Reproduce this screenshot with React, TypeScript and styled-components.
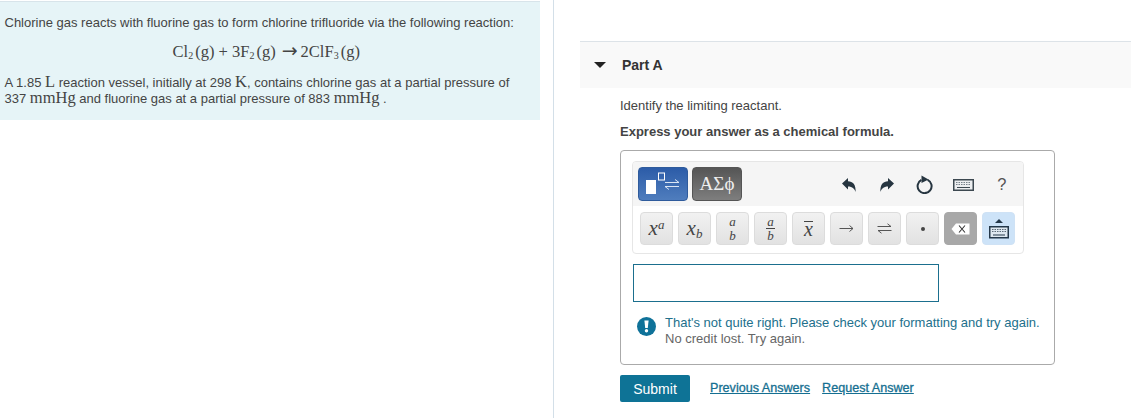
import React from "react";
import styled, { createGlobalStyle } from "styled-components";

const Global = createGlobalStyle`
  html, body { margin: 0; padding: 0; background: #fff; }
  body { font-family: "Liberation Sans", Arial, sans-serif; color: #444; }
`;

const Page = styled.div`
  display: flex;
  width: 1131px;
  height: 418px;
  overflow: hidden;
`;
const LeftColumn = styled.div`
  width: 553px;
  flex: none;
  border-right: 1px solid #d3dfe8;
  padding-top: 1px;
  box-sizing: content-box;
`;
const Intro = styled.div`
  width: 540px;
  height: 119px;
  box-sizing: border-box;
  background: #e6f4f7;
  border-top: 1px solid #d8e4ea;
  padding: 13px 0 0 4.5px;
  font-size: 13px;
  line-height: 16px;
  color: #444;
`;
const Equation = styled.div`
  font-family: "Liberation Serif", serif;
  font-size: 16.5px;
  line-height: 20px;
  text-align: center;
  margin: 11px 0 13px;
  padding-right: 12px;
  color: #444;
  sub { font-size: 10px; line-height: 0; vertical-align: -2px; }
`;
const Paren = styled.span`
  margin-left: 2px;
`;
const ReactionArrow = styled.span`
  font-family: "DejaVu Sans", sans-serif;
  font-size: 19px;
  line-height: 0;
  margin: 0 3px 0 6px;
`;
const Mathy = styled.span`
  font-family: "Liberation Serif", serif;
  font-size: 16.5px;
  line-height: 14px;
  display: inline-block;
`;
const RightColumn = styled.div`
  flex: 1;
  padding: 41px 0 0 26px;
  min-width: 0;
`;
const PartHeader = styled.div`
  display: flex;
  align-items: center;
  height: 47px;
  box-sizing: border-box;
  background: #f9f9f9;
  border-top: 1px solid #dde3e8;
  padding: 0 0 0 14px;
`;
const Caret = styled.span`
  width: 0;
  height: 0;
  border-left: 6px solid transparent;
  border-right: 6px solid transparent;
  border-top: 6px solid #222;
  margin-right: 16px;
`;
const PartTitle = styled.span`
  font-size: 14px;
  font-weight: 700;
  color: #333;
`;
const Body = styled.div`
  padding: 10px 0 0 40px;
`;
const Prompt = styled.div`
  font-size: 13px;
  line-height: 16px;
  color: #444;
`;
const Instruction = styled(Prompt)`
  font-weight: 700;
  margin-top: 10px;
`;
const Editor = styled.div`
  width: 435px;
  height: 215px;
  box-sizing: border-box;
  margin-top: 10px;
  border: 1px solid #aaa;
  border-radius: 4px;
  padding: 10px 0 0 11px;
`;
const Palette = styled.div`
  width: 392px;
  height: 93px;
  box-sizing: border-box;
  border: 1px solid #e6e6e6;
  border-radius: 4px;
  overflow: hidden;
`;
const TopBar = styled.div`
  display: flex;
  align-items: center;
  height: 44px;
  box-sizing: border-box;
  background: #f5f5f5;
  padding: 0 2px 0 5px;
  gap: 4px;
`;
const ModeButton = styled.div<{ $blue?: boolean }>`
  width: 50px;
  height: 34px;
  box-sizing: border-box;
  border-radius: 4px;
  border: 1px solid ${(p) => (p.$blue ? "#2f5b9c" : "#555")};
  background: ${(p) =>
    p.$blue
      ? "linear-gradient(#2c5ca8, #4f7dbd)"
      : "linear-gradient(#555, #7e7e7e)"};
  display: flex;
  align-items: center;
  justify-content: center;
  color: #eee;
  font-family: "Liberation Serif", serif;
  font-size: 19px;
`;
const ToolGroup = styled.div`
  margin-left: auto;
  display: flex;
  align-items: center;
  color: #333;
  padding-top: 1px;
`;
const Tool = styled.div`
  width: 38.25px;
  height: 34px;
  display: flex;
  align-items: center;
  justify-content: center;
`;
const Help = styled(Tool)`
  font-size: 16.5px;
  color: #555;
`;
const SymbolRow = styled.div`
  display: flex;
  gap: 5px;
  padding: 6px 0 0 7px;
`;
const SymbolButton = styled.div<{ $tone?: "dark" | "blue" }>`
  width: 33px;
  height: 33px;
  box-sizing: border-box;
  border-radius: 4px;
  border: 1px solid
    ${(p) => (p.$tone === "dark" ? "#a8a8a8" : p.$tone === "blue" ? "#cfe2f5" : "#dcdcdc")};
  background: ${(p) =>
    p.$tone === "dark"
      ? "#a8a8a8"
      : p.$tone === "blue"
      ? "#cde3f8"
      : "linear-gradient(#f1f1f1, #e2e2e2)"};
  display: flex;
  align-items: center;
  justify-content: center;
  font-family: "Liberation Serif", serif;
  font-style: italic;
  font-size: 21px;
  color: #444;
`;
const Script = styled.span`
  white-space: nowrap;
  sup { font-size: 13px; line-height: 0; vertical-align: 6px; }
  sub { font-size: 13px; line-height: 0; vertical-align: -3px; }
`;
const Dot = styled.span`
  width: 4px;
  height: 4px;
  border-radius: 50%;
  background: #444;
`;
const Stack = styled.div<{ $rule?: boolean }>`
  display: flex;
  flex-direction: column;
  align-items: center;
  font-size: 13px;
  line-height: 13px;
  span + span { border-top: 1px solid ${(p) => (p.$rule ? "#444" : "transparent")}; padding: 0 1px; }
`;
const Overbar = styled.span`
  border-top: 1px solid #444;
  line-height: 14px;
  font-size: 20px;
`;
const Answer = styled.div`
  width: 306px;
  height: 38px;
  box-sizing: border-box;
  margin: 10px 0 0 1px;
  border: 1px solid #1b6f8e;
`;
const Feedback = styled.div`
  display: flex;
  margin: 13px 0 0 5px;
  gap: 9px;
`;
const Alert = styled.div`
  width: 19px;
  height: 19px;
  margin-top: 2px;
  border-radius: 50%;
  background: #0f7299;
  color: #fff;
  flex: none;
  display: flex;
  align-items: center;
  justify-content: center;
`;
const FeedbackText = styled.div`
  font-size: 13px;
  line-height: 16px;
`;
const FeedbackLead = styled.div`
  color: #22708c;
`;
const FeedbackNote = styled.div`
  color: #666;
`;
const Actions = styled.div`
  display: flex;
  align-items: center;
  margin-top: 10px;
`;
const Submit = styled.div`
  width: 70px;
  height: 27px;
  background: #0e7396;
  color: #fff;
  border-radius: 2px;
  font-size: 14px;
  display: flex;
  align-items: center;
  justify-content: center;
  margin-right: 20px;
`;
const ActionLink = styled.a`
  color: #156f91;
  font-size: 12.6px;
  -webkit-text-stroke: 0.3px #156f91;
  text-decoration: underline;
  margin: 0 12px 1px 0;
`;

const ModeIcon = () => (
  <svg width="36" height="26" viewBox="0 0 36 26">
    <rect x="1" y="9" width="10" height="14" fill="#fff" />
    <rect x="13.5" y="2" width="6" height="7" fill="none" stroke="#fff" />
    <path d="M20 11.5h14M30 8.5l4 3M34 15.5H20M24 18.5l-4-3" fill="none" stroke="#dbe6f4" strokeWidth="1" />
  </svg>
);
const Undo = ({ flip }: { flip?: boolean }) => (
  <svg width="14" height="14" viewBox="0 0 14 14" style={flip ? { transform: "scaleX(-1)" } : undefined}>
    <path d="M0 5.5L6 0V3.2C10.8 3.2 14 6.5 13.6 14C12.8 11 10.5 8.5 6 8.5V11.5Z" fill="#263540" />
  </svg>
);
const Redo = () => (
  <svg width="18" height="19" viewBox="0 0 18 19">
    <path d="M11.6 4.8A7 7 0 1 1 5.4 4.9" fill="none" stroke="#263540" strokeWidth="2" />
    <path d="M5.5 0.5L12.5 4.6L5.5 8Z" fill="#263540" />
  </svg>
);
const Keyboard = () => (
  <svg width="21" height="12" viewBox="0 0 21 12">
    <rect x="0.75" y="0.75" width="19.5" height="10.5" fill="#eceef0" stroke="#3c4850" strokeWidth="1.5" />
    <path d="M3 3.5h15M3 5.5h15" stroke="#77828a" strokeDasharray="1.5 1" />
    <path d="M4 8.5h13" stroke="#3c4850" />
  </svg>
);
const Arrow = () => (
  <svg width="15" height="9" viewBox="0 0 15 9">
    <path d="M0.5 4.5H14M10.5 1.5L14 4.5L10.5 7.5" fill="none" stroke="#555" />
  </svg>
);
const Equilibrium = () => (
  <svg width="15" height="11" viewBox="0 0 15 11">
    <path d="M0.5 3.5H14M10.5 0.8L14 3.5M14.5 7.5H1M4.5 10.2L1 7.5" fill="none" stroke="#555" />
  </svg>
);
const Backspace = () => (
  <svg width="19" height="12" viewBox="0 0 19 12">
    <path d="M5 0.5H18.5V11.5H5L0.5 6Z" fill="#fff" />
    <path d="M8 2.5l6 7M14 2.5l-6 7" stroke="#333" strokeWidth="1.1" />
  </svg>
);
const KeyboardToggle = () => (
  <svg width="20" height="21" viewBox="0 0 20 21">
    <path d="M10 1l4 4H6z" fill="#24384a" />
    <g transform="translate(0 8)">
      <rect x="0.75" y="0.75" width="18.5" height="11" fill="#dfe8f0" stroke="#24384a" strokeWidth="1.5" />
      <path d="M3 3.5h14M3 5.5h14" stroke="#5c6b78" strokeDasharray="1.5 1" />
      <path d="M4 9h12" stroke="#24384a" />
    </g>
  </svg>
);
const Bang = () => (
  <svg width="5" height="13" viewBox="0 0 5 13">
    <path d="M0.4 0.5H4.6L3.8 8H1.2Z" fill="#fff" />
    <circle cx="2.5" cy="10.8" r="1.7" fill="#fff" />
  </svg>
);

export default function App() {
  return (
    <>
      <Global />
      <Page>
        <LeftColumn>
          <Intro>
            Chlorine gas reacts with fluorine gas to form chlorine trifluoride via the following reaction:
            <Equation>
              Cl<sub>2</sub><Paren>(g)</Paren> + 3F<sub>2</sub><Paren>(g)</Paren><ReactionArrow>→</ReactionArrow>2ClF<sub>3</sub><Paren>(g)</Paren>
            </Equation>
            A 1.85 <Mathy>L</Mathy> reaction vessel, initially at 298 <Mathy>K</Mathy>, contains chlorine gas at a partial pressure of
            <br />
            337 <Mathy>mmHg</Mathy> and fluorine gas at a partial pressure of 883 <Mathy>mmHg</Mathy> .
          </Intro>
        </LeftColumn>
        <RightColumn>
          <PartHeader>
            <Caret />
            <PartTitle>Part A</PartTitle>
          </PartHeader>
          <Body>
            <Prompt>Identify the limiting reactant.</Prompt>
            <Instruction>Express your answer as a chemical formula.</Instruction>
            <Editor>
              <Palette>
                <TopBar>
                  <ModeButton $blue><ModeIcon /></ModeButton>
                  <ModeButton>ΑΣϕ</ModeButton>
                  <ToolGroup>
                    <Tool><Undo /></Tool>
                    <Tool><Undo flip /></Tool>
                    <Tool><Redo /></Tool>
                    <Tool><Keyboard /></Tool>
                    <Help>?</Help>
                  </ToolGroup>
                </TopBar>
                <SymbolRow>
                  <SymbolButton><Script>x<sup>a</sup></Script></SymbolButton>
                  <SymbolButton><Script>x<sub>b</sub></Script></SymbolButton>
                  <SymbolButton><Stack><span>a</span><span>b</span></Stack></SymbolButton>
                  <SymbolButton><Stack $rule><span>a</span><span>b</span></Stack></SymbolButton>
                  <SymbolButton><Overbar>x</Overbar></SymbolButton>
                  <SymbolButton><Arrow /></SymbolButton>
                  <SymbolButton><Equilibrium /></SymbolButton>
                  <SymbolButton><Dot /></SymbolButton>
                  <SymbolButton $tone="dark"><Backspace /></SymbolButton>
                  <SymbolButton $tone="blue"><KeyboardToggle /></SymbolButton>
                </SymbolRow>
              </Palette>
              <Answer />
              <Feedback>
                <Alert><Bang /></Alert>
                <FeedbackText>
                  <FeedbackLead>That's not quite right. Please check your formatting and try again.</FeedbackLead>
                  <FeedbackNote>No credit lost. Try again.</FeedbackNote>
                </FeedbackText>
              </Feedback>
            </Editor>
            <Actions>
              <Submit>Submit</Submit>
              <ActionLink>Previous Answers</ActionLink>
              <ActionLink>Request Answer</ActionLink>
            </Actions>
          </Body>
        </RightColumn>
      </Page>
    </>
  );
}
